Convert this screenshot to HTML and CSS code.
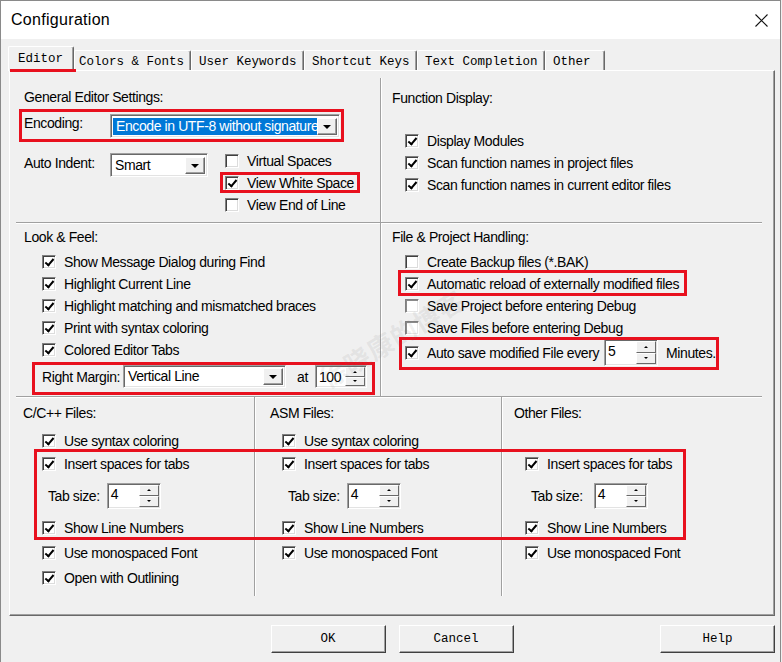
FILE: index.html
```html
<!DOCTYPE html>
<html lang="en">
<head>
  <meta charset="UTF-8" />
  <title>Configuration</title>
  <link rel="stylesheet" href="styles.css">
</head>
<body>
<div class="window">

  <div class="titlebar">
    <span class="title">Configuration</span>
    <svg class="close" width="13" height="13" viewBox="0 0 13 13"><path d="M0.5 0.5 L12.5 12.5 M12.5 0.5 L0.5 12.5" stroke="#111" stroke-width="1.1" fill="none"/></svg>
  </div>

  <div class="tabs">
    <div class="tab tab-editor active">Editor</div>
    <div class="tab tab-colors">Colors &amp; Fonts</div>
    <div class="tab tab-keywords">User Keywords</div>
    <div class="tab tab-shortcut">Shortcut Keys</div>
    <div class="tab tab-completion">Text Completion</div>
    <div class="tab tab-other">Other</div>
  </div>

  <div class="panel">

    <!-- general / function display -->
    <div class="row row-general">
      <div class="col col-left">
        <div class="caption">General Editor Settings:</div>
        <div class="field field-enc marked">
          <span class="label">Encoding:</span>
          <div class="select select-enc">
            <span class="value"><span class="hl">Encode in UTF-8 without signature</span></span>
            <span class="drop"></span>
          </div>
        </div>
        <div class="indent-row">
          <div class="field field-indent">
            <span class="label">Auto Indent:</span>
            <div class="select select-indent"><span class="value">Smart</span><span class="drop"></span></div>
          </div>
          <div class="checks checks-view">
            <div class="check"><span class="box"></span>Virtual Spaces</div>
            <div class="check marked mark-ws"><span class="box on"></span>View White Space</div>
            <div class="check"><span class="box"></span>View End of Line</div>
          </div>
        </div>
      </div>
      <div class="col col-right">
        <div class="caption">Function Display:</div>
        <div class="checks checks-func">
          <div class="check"><span class="box on"></span>Display Modules</div>
          <div class="check"><span class="box on"></span>Scan function names in project files</div>
          <div class="check"><span class="box on"></span>Scan function names in current editor files</div>
        </div>
      </div>
    </div>

    <!-- look and feel / file handling -->
    <div class="row row-look">
      <div class="col col-left">
        <div class="caption">Look &amp; Feel:</div>
        <div class="checks checks-look">
          <div class="check"><span class="box on"></span>Show Message Dialog during Find</div>
          <div class="check"><span class="box on"></span>Highlight Current Line</div>
          <div class="check"><span class="box on"></span>Highlight matching and mismatched braces</div>
          <div class="check"><span class="box on"></span>Print with syntax coloring</div>
          <div class="check"><span class="box on"></span>Colored Editor Tabs</div>
        </div>
        <div class="field field-margin marked">
          <span class="label">Right Margin:</span>
          <div class="select select-margin"><span class="value">Vertical Line</span><span class="drop"></span></div>
          <span class="at">at</span>
          <div class="spin spin-margin"><span class="num">100</span><span class="arrows"><span class="up"></span><span class="down"></span></span></div>
        </div>
      </div>
      <div class="col col-right">
        <div class="caption">File &amp; Project Handling:</div>
        <div class="checks checks-file">
          <div class="check"><span class="box"></span>Create Backup files (*.BAK)</div>
          <div class="check marked mark-reload"><span class="box on"></span>Automatic reload of externally modified files</div>
          <div class="check"><span class="box dim"></span>Save Project before entering Debug</div>
          <div class="check"><span class="box dim"></span>Save Files before entering Debug</div>
          <div class="check check-autosave marked mark-autosave">
            <span class="box on"></span>Auto save modified File every
            <div class="spin spin-save"><span class="num">5</span><span class="arrows"><span class="up"></span><span class="down"></span></span></div>
            <span class="unit">Minutes.</span>
          </div>
        </div>
      </div>
    </div>

    <!-- file types -->
    <div class="row row-files">
      <div class="col files files-c">
        <div class="caption">C/C++ Files:</div>
        <div class="files-list">
          <div class="check"><span class="box on"></span>Use syntax coloring</div>
          <div class="check"><span class="box on"></span>Insert spaces for tabs</div>
          <div class="tabsize"><span class="label">Tab size:</span><div class="spin"><span class="num">4</span><span class="arrows"><span class="up"></span><span class="down"></span></span></div></div>
          <div class="check"><span class="box on"></span>Show Line Numbers</div>
          <div class="check"><span class="box on"></span>Use monospaced Font</div>
          <div class="check"><span class="box on"></span>Open with Outlining</div>
        </div>
      </div>
      <div class="col files files-asm">
        <div class="caption">ASM Files:</div>
        <div class="files-list">
          <div class="check"><span class="box on"></span>Use syntax coloring</div>
          <div class="check"><span class="box on"></span>Insert spaces for tabs</div>
          <div class="tabsize"><span class="label">Tab size:</span><div class="spin"><span class="num">4</span><span class="arrows"><span class="up"></span><span class="down"></span></span></div></div>
          <div class="check"><span class="box on"></span>Show Line Numbers</div>
          <div class="check"><span class="box on"></span>Use monospaced Font</div>
        </div>
      </div>
      <div class="col files files-other">
        <div class="caption">Other Files:</div>
        <div class="files-list">
          <div class="check-gap"></div>
          <div class="check"><span class="box on"></span>Insert spaces for tabs</div>
          <div class="tabsize"><span class="label">Tab size:</span><div class="spin"><span class="num">4</span><span class="arrows"><span class="up"></span><span class="down"></span></span></div></div>
          <div class="check"><span class="box on"></span>Show Line Numbers</div>
          <div class="check"><span class="box on"></span>Use monospaced Font</div>
        </div>
      </div>
      <div class="mark-files"></div>
    </div>

    <span class="watermark">徐晓康的博客</span>
  </div>

  <div class="buttons">
    <span></span>
    <div class="btn-pair">
      <button class="btn">OK</button>
      <button class="btn">Cancel</button>
    </div>
    <button class="btn btn-help">Help</button>
  </div>

</div>
</body>
</html>
```

FILE: styles.css
```css
* {
  box-sizing: border-box;
}

body {
  margin: 0;
  background: #f0f0f0;
  font-family: "Liberation Sans", Arial, sans-serif;
  font-size: 14px;
  letter-spacing: -0.4px;
  color: #000;
}

.window {
  width: 781px;
  height: 662px;
  border: 1px solid #8a8a8a;
  border-bottom: none;
  background: #f0f0f0;
}

/* title bar */
.titlebar {
  height: 38px;
  background: #fff;
  display: flex;
  align-items: center;
  justify-content: space-between;
  padding: 0 12px 0 10px;
}

.title {
  font-size: 16px;
  letter-spacing: 0.3px;
}

/* tabs */
.tabs {
  display: flex;
  align-items: flex-end;
  height: 24px;
  margin: 7px 0 0 7px;
  font-family: "Liberation Mono", "Courier New", monospace;
  font-size: 12.5px;
  letter-spacing: 0;
}

.tab {
  height: 20px;
  line-height: 18px;
  padding-top: 2px;
  padding-left: 7px;
  background: #f0f0f0;
  border-top: 1px solid #fff;
  border-left: 1px solid #fff;
  border-right: 1px solid #696969;
  box-shadow: inset -1px 0 0 #a0a0a0;
  border-radius: 2px 2px 0 0;
  white-space: nowrap;
}

.tab-editor { width: 66px; }
.tab-colors { width: 117px; padding-left: 4px; }
.tab-keywords { width: 113px; }
.tab-shortcut { width: 113px; }
.tab-completion { width: 128px; }
.tab-other { width: 60px; }

.tab.active {
  position: relative;
  z-index: 2;
  height: 25px;
  margin-bottom: -1px;
  padding-top: 3px;
  padding-left: 9px;
}

.tab.active::after {
  content: '';
  position: absolute;
  left: 1px;
  top: 22px;
  width: 66px;
  height: 3px;
  background: #e8101e;
}

/* panel */
.panel {
  position: relative;
  width: 766px;
  height: 546px;
  margin-left: 8px;
  padding: 7px 12px 0 6px;
  border-top: 1px solid #fff;
  border-left: 1px solid #fff;
  border-right: 1px solid #696969;
  border-bottom: 1px solid #696969;
  box-shadow: inset -1px -1px 0 #a0a0a0;
}

.row {
  border-bottom: 1px solid #a0a0a0;
  box-shadow: 0 1px 0 #fff;
  display: grid;
  grid-template-columns: 365px 1fr;
}

.row-general { height: 145px; }
.row-look { height: 174px; }

.row-files {
  position: relative;
  height: 199px;
  border-bottom: none;
  box-shadow: none;
  grid-template-columns: 239px 247px 1fr;
}

.col-left {
  border-right: 1px solid #a0a0a0;
  padding-left: 8px;
}

.col-right {
  border-left: 1px solid #fff;
  padding-left: 10px;
}

.row-general .col-left { padding-top: 11px; }
.row-general .col-right { padding-top: 12px; }
.row-look .col { padding-top: 6px; }

.caption {
  line-height: 16px;
  white-space: nowrap;
}

/* red annotation frames */
.marked {
  position: relative;
}

.marked::after {
  content: '';
  position: absolute;
  border: 3px solid #e8101e;
  pointer-events: none;
}

.field-enc::after { top: -5px; left: -5px; right: -4px; bottom: -4px; }
.mark-ws::after { top: 0; left: -5px; right: -6px; bottom: 1px; }
.field-margin::after { top: -3px; left: -10px; right: -8px; bottom: -7px; }
.mark-reload::after { top: -3px; left: -7px; right: -8px; bottom: -1px; }
.mark-autosave::after { top: -2px; left: -6px; right: -3px; bottom: -4px; }

.mark-files {
  position: absolute;
  left: 18px;
  top: 52px;
  width: 652px;
  height: 91px;
  border: 3px solid #e8101e;
}

/* fields */
.field {
  display: flex;
  align-items: flex-start;
  width: fit-content;
}

.label {
  white-space: nowrap;
  line-height: 16px;
}

.field-enc {
  margin-top: 9px;
}

.field-enc .label,
.field-indent .label {
  width: 86px;
  margin-top: 1px;
}

.field-indent .label { margin-top: 6px; }
.field-indent .select { margin-top: 4px; }

.indent-row {
  display: flex;
  margin-top: 11px;
}

.select {
  display: flex;
  height: 24px;
  padding: 3px 2px 2px 2px;
  background: #fff;
  border: 1px solid;
  border-color: #a0a0a0 #fff #fff #a0a0a0;
  box-shadow: inset 1px 1px 0 #696969, inset -1px -1px 0 #e3e3e3;
}

.select-enc { width: 230px; }
.select-indent { width: 98px; }
.select-margin { width: 163px; height: 23px; padding-top: 2px; }

.value {
  flex: 1;
  overflow: hidden;
  white-space: nowrap;
  line-height: 17px;
  padding-left: 2px;
}

.select-enc .value { padding-left: 0; }

.hl {
  display: block;
  background: #0078d7;
  color: #fff;
  padding-left: 3px;
  height: 17px;
}

.drop {
  width: 20px;
  display: flex;
  align-items: center;
  justify-content: center;
  background: #f0f0f0;
  border: 1px solid;
  border-color: #fff #696969 #696969 #fff;
  box-shadow: inset -1px -1px 0 #a0a0a0;
}

.drop::before {
  content: '';
  border-left: 4px solid transparent;
  border-right: 4px solid transparent;
  border-top: 4px solid #000;
}

/* checkboxes */
.checks-view { margin: 1px 0 0 17px; }
.checks-func { margin: 24px 0 0 13px; }
.checks-look { margin: 6px 0 0 18px; }
.checks-file { margin: 6px 0 0 13px; }

.check {
  display: flex;
  align-items: center;
  height: 22px;
  white-space: nowrap;
}

.check.marked {
  width: fit-content;
}

.box {
  position: relative;
  flex: none;
  width: 14px;
  height: 14px;
  margin-right: 8px;
  background: #fff;
  border: 1px solid;
  border-color: #808080 #fff #fff #808080;
  box-shadow: inset 1px 1px 0 #404040, inset -1px -1px 0 #dcdcdc;
}

.box.dim {
  box-shadow: inset 1px 1px 0 #8a8a8a, inset -1px -1px 0 #e6e6e6;
}

.box.on::after {
  content: '';
  position: absolute;
  left: 4px;
  top: 1px;
  width: 3px;
  height: 7px;
  border: solid #000;
  border-width: 0 2.5px 2.5px 0;
  transform: rotate(40deg);
}

.check-autosave {
  height: 27px;
}

.unit {
  margin-left: 8px;
}

/* right margin row */
.field-margin {
  align-items: center;
  height: 23px;
  margin: 4px 0 0 18px;
}

.field-margin .label {
  width: 81px;
}

.at {
  margin: 0 7px 0 11px;
}

/* spin boxes */
.spin {
  display: flex;
  width: 54px;
  height: 26px;
  background: #fff;
  border: 1px solid;
  border-color: #a0a0a0 #fff #fff #a0a0a0;
  box-shadow: inset 1px 1px 0 #696969, inset -1px -1px 0 #e3e3e3;
  padding: 1px;
}

.spin-margin { width: 52px; height: 23px; }
.spin-save { width: 54px; height: 27px; margin-left: 5px; }

.num {
  flex: 1;
  padding-left: 2px;
  line-height: 20px;
}

.arrows {
  display: flex;
  flex-direction: column;
  width: 20px;
}

.up,
.down {
  flex: 1;
  display: flex;
  align-items: center;
  justify-content: center;
  background: #f0f0f0;
  border: 1px solid;
  border-color: #fff #696969 #696969 #fff;
}

.up::before {
  content: '';
  border-left: 2px solid transparent;
  border-right: 2px solid transparent;
  border-bottom: 2px solid #000;
}

.down::before {
  content: '';
  border-left: 2px solid transparent;
  border-right: 2px solid transparent;
  border-top: 2px solid #000;
}

/* file type columns */
.files {
  padding-top: 8px;
}

.files-c {
  border-right: 1px solid #a0a0a0;
  padding-left: 7px;
}

.files-asm {
  border-left: 1px solid #fff;
  border-right: 1px solid #a0a0a0;
  padding-left: 14px;
}

.files-other {
  border-left: 1px solid #fff;
  padding-left: 11px;
}

.files-list {
  margin-top: 8px;
}

.files-c .files-list { margin-left: 19px; }
.files-asm .files-list { margin-left: 12px; }
.files-other .files-list { margin-left: 11px; }

.files .check,
.check-gap {
  height: 23px;
}

.tabsize {
  display: flex;
  align-items: center;
  height: 41px;
  padding-left: 6px;
}

.tabsize .label {
  margin-right: 7px;
}

.files-other .tabsize .label {
  margin-right: 11px;
}

.tabsize .spin .num {
  line-height: 18px;
}

.tabsize ~ .check {
  margin-bottom: 2px;
}

/* watermark */
.watermark {
  position: absolute;
  left: 312px;
  top: 290px;
  transform-origin: 0 50%;
  transform: rotate(-31deg);
  font-family: "Noto Sans CJK SC", sans-serif;
  font-weight: bold;
  font-size: 26px;
  letter-spacing: 1px;
  color: rgba(110, 110, 110, 0.1);
  pointer-events: none;
}

/* bottom buttons */
.buttons {
  display: grid;
  grid-template-columns: 1fr auto 1fr;
  margin: 9px 5px 0 8px;
}

.btn-pair {
  display: flex;
  gap: 13px;
}

.btn {
  width: 115px;
  height: 28px;
  padding: 0;
  font-family: "Liberation Mono", "Courier New", monospace;
  font-size: 12.5px;
  color: #000;
  background: #f0f0f0;
  border: 1px solid;
  border-color: #fff #404040 #404040 #fff;
  box-shadow: inset -1px -1px 0 #a0a0a0;
}

.btn-help {
  justify-self: end;
}
```
